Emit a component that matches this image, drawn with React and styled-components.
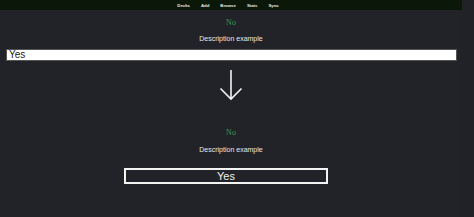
import styled, { createGlobalStyle } from "styled-components"

const Global = createGlobalStyle`
    html, body {
        margin: 0;
        padding: 0;
        background: #212328;
        height: 100%;
    }
    #root {
        min-height: 100%;
    }
`

const Page = styled.div`
    display: flex;
    min-height: 217px;
    background: #212328;
`

const Main = styled.div`
    width: 462px;
    display: flex;
    flex-direction: column;
    align-items: center;
`

const ScrollStrip = styled.div`
    flex: 1;
    background: #202227;
`

const Nav = styled.nav`
    box-sizing: border-box;
    width: 100%;
    height: 10px;
    padding-right: 6px;
    background: #0b1809;
    display: flex;
    justify-content: center;
    align-items: center;
    gap: 9px;
    font-family: "Liberation Sans", Arial, sans-serif;
    font-size: 4.3px;
    font-weight: 700;
    color: #e8e8e8;
`

const NavLink = styled.span`
    padding: 0 1px;
`

const Side = styled.div`
    width: 100%;
    display: flex;
    flex-direction: column;
    align-items: center;
    padding-top: ${p => p.$top}px;
`

const Answer = styled.div`
    font-family: "Liberation Serif", "Times New Roman", serif;
    font-size: 8px;
    color: #3f9a4f;
    line-height: 10px;
`

const Desc = styled.div`
    font-family: "Liberation Sans", Arial, sans-serif;
    font-size: 7px;
    color: #e8e8e8;
    line-height: 8px;
    margin-top: ${p => p.$gap}px;
`

const Input = styled.div`
    box-sizing: border-box;
    align-self: stretch;
    margin: 6px 5px 0 6px;
    height: 12px;
    background: #fff;
    border: 1px solid #555;
    font-family: "Liberation Sans", Arial, sans-serif;
    font-size: 10px;
    line-height: 10px;
    color: #222;
    padding-left: 2px;
`

const Arrow = styled.svg`
    margin-top: 8px;
    display: block;
`

const OutlineButton = styled.div`
    box-sizing: border-box;
    margin: 14px 10px 0 0;
    width: 204px;
    height: 16px;
    border: 2px solid #f4f4f4;
    display: flex;
    justify-content: center;
    align-items: center;
    font-family: "Liberation Sans", Arial, sans-serif;
    font-size: 11px;
    color: #f0f0f0;
`

export default function App() {
    return (
        <Page>
            <Global />
            <Main>
                <Nav>
                    <NavLink>Decks</NavLink>
                    <NavLink>Add</NavLink>
                    <NavLink>Browse</NavLink>
                    <NavLink>Stats</NavLink>
                    <NavLink>Sync</NavLink>
                </Nav>
                <Side $top={8}>
                    <Answer>No</Answer>
                    <Desc $gap={7}>Description example</Desc>
                    <Input>Yes</Input>
                </Side>
                <Arrow width="24" height="32" viewBox="0 0 24 32">
                    <path d="M12 1 V30 M1.5 19.5 L12 30 L22.5 19.5" stroke="#f2f2f2" strokeWidth="1.6" fill="none" />
                </Arrow>
                <Side $top={27}>
                    <Answer>No</Answer>
                    <Desc $gap={8}>Description example</Desc>
                    <OutlineButton>Yes</OutlineButton>
                </Side>
            </Main>
            <ScrollStrip />
        </Page>
    )
}
